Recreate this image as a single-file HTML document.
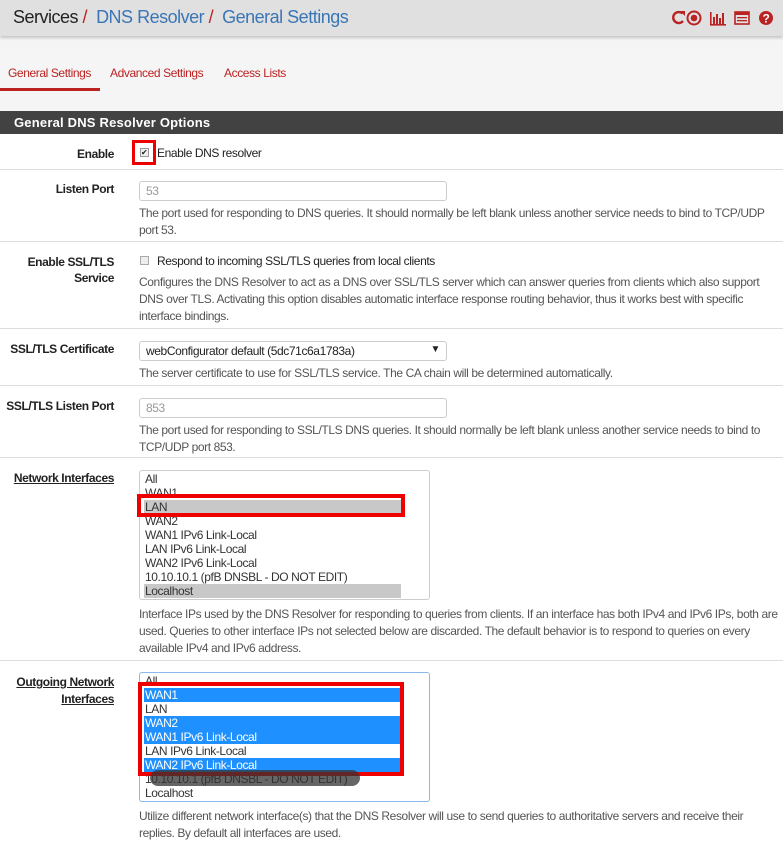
<!DOCTYPE html>
<html><head><meta charset="utf-8"><style>
*{box-sizing:border-box;margin:0;padding:0}
body{width:783px;height:843px;overflow:hidden;background:#f5f5f5;font-family:"Liberation Sans",sans-serif;font-size:12px;color:#222;position:relative;letter-spacing:-0.4px}
.a{position:absolute}
.hdr{left:0;top:0;width:783px;height:36px;background:#e0e0e0;box-shadow:0 2px 3px rgba(0,0,0,.2)}
.crumb{left:13px;top:7px;font-size:18px;letter-spacing:-0.5px}
.crumb .l{color:#3a76b5}.crumb .s{color:#b22}
.tabs{top:66px;font-size:12px;color:#b22}
.panel{left:0;top:111px;width:783px;height:740px;background:#fff}
.ph{left:0;top:111px;width:783px;height:23px;background:#424242;color:#fff;font-weight:bold;font-size:13px;padding:4px 14px;letter-spacing:0.2px}
.sep{left:0;width:783px;height:1px;background:#ddd}
.lbl{right:669px;text-align:right;font-weight:bold;font-size:12px}
.help{left:139px;width:642px;color:#555;line-height:17px}
.inp{left:139px;width:308px;height:20px;border:1px solid #ccc;border-radius:3px;color:#999;padding:2px 6px}
.lst{left:139px;width:291px;border:1px solid #ccc;border-radius:3px;background:#fff;line-height:14px;padding:1px 0 0 5px;overflow:hidden;color:#333}
.lst div{height:14px;margin-right:28px;padding-left:1px;margin-left:-1px}
</style></head><body>
<div class="a hdr"></div>
<div class="a crumb">Services <span class="s">/</span>&nbsp; <span class="l">DNS Resolver</span> <span class="s">/</span>&nbsp; <span class="l">General Settings</span></div>
<svg class="a" style="left:672px;top:9px" width="104" height="18" viewBox="0 0 104 18">
<g fill="none" stroke="#b22" stroke-width="2.4"><path d="M10.5 4.5 A5.5 5.5 0 1 0 11 12"/></g>
<path d="M8 2 L13 2 L13 7 Z" fill="#b22"/>
<circle cx="22" cy="9" r="6.5" fill="none" stroke="#b22" stroke-width="2"/><circle cx="22" cy="9" r="3.3" fill="#b22"/>
<g fill="#b22"><rect x="38" y="15" width="16" height="1.6"/><rect x="38" y="3" width="1.6" height="13"/><rect x="41" y="8" width="2" height="7"/><rect x="44" y="5" width="2" height="10"/><rect x="47" y="9" width="2" height="6"/><rect x="50" y="4" width="2" height="11"/></g>
<rect x="63" y="3" width="14" height="12" fill="none" stroke="#b22" stroke-width="1.6"/><g fill="#b22"><rect x="63" y="3" width="14" height="3"/><rect x="65" y="8" width="10" height="1.3"/><rect x="65" y="11" width="10" height="1.3"/></g>
<circle cx="94" cy="9" r="7" fill="#b22"/><text x="94" y="13.5" fill="#fff" font-size="12" font-weight="bold" text-anchor="middle" font-family="Liberation Sans">?</text>
</svg>
<div class="a tabs" style="left:8px">General Settings</div>
<div class="a tabs" style="left:110px">Advanced Settings</div>
<div class="a tabs" style="left:224px">Access Lists</div>
<div class="a" style="left:0;top:88px;width:100px;height:3px;background:#b22"></div>
<div class="a panel"></div>
<div class="a ph">General DNS Resolver Options</div>

<div class="a lbl" style="top:147px">Enable</div>
<div class="a" style="left:132px;top:140px;width:24px;height:25px;border:3px solid #e00"></div>
<div class="a" style="left:140px;top:148px;width:9px;height:9px;border:1px solid #999;background:#eee;font-size:8px;line-height:8px">✔</div>
<div class="a" style="left:157px;top:146px">Enable DNS resolver</div>
<div class="a sep" style="top:169px"></div>

<div class="a lbl" style="top:182px">Listen Port</div>
<div class="a inp" style="top:181px">53</div>
<div class="a help" style="top:205px">The port used for responding to DNS queries. It should normally be left blank unless another service needs to bind to TCP/UDP port 53.</div>
<div class="a sep" style="top:241px"></div>

<div class="a lbl" style="top:254px;line-height:16px">Enable SSL/TLS<br>Service</div>
<div class="a" style="left:140px;top:256px;width:9px;height:9px;border:1px solid #aaa;background:#eee"></div>
<div class="a" style="left:157px;top:254px">Respond to incoming SSL/TLS queries from local clients</div>
<div class="a help" style="top:274px;width:644px">Configures the DNS Resolver to act as a DNS over SSL/TLS server which can answer queries from clients which also support DNS over TLS. Activating this option disables automatic interface response routing behavior, thus it works best with specific interface bindings.</div>
<div class="a sep" style="top:328px"></div>

<div class="a lbl" style="top:342px">SSL/TLS Certificate</div>
<div class="a inp" style="top:341px;color:#222">webConfigurator default (5dc71c6a1783a)<span style="position:absolute;right:6px;font-size:10px">▼</span></div>
<div class="a help" style="top:365px">The server certificate to use for SSL/TLS service. The CA chain will be determined automatically.</div>
<div class="a sep" style="top:385px"></div>

<div class="a lbl" style="top:399px">SSL/TLS Listen Port</div>
<div class="a inp" style="top:398px">853</div>
<div class="a help" style="top:422px">The port used for responding to SSL/TLS DNS queries. It should normally be left blank unless another service needs to bind to TCP/UDP port 853.</div>
<div class="a sep" style="top:457px"></div>

<div class="a lbl" style="top:471px;text-decoration:underline">Network Interfaces</div>
<div class="a lst" style="top:470px;height:130px">
<div>All</div><div>WAN1</div><div style="background:#c8c8c8">LAN</div><div>WAN2</div><div>WAN1 IPv6 Link-Local</div><div>LAN IPv6 Link-Local</div><div>WAN2 IPv6 Link-Local</div><div>10.10.10.1 (pfB DNSBL - DO NOT EDIT)</div><div style="background:#c8c8c8">Localhost</div></div>
<div class="a" style="left:137px;top:494px;width:268px;height:23px;border:4px solid #e00"></div>
<div class="a help" style="top:606px;width:644px">Interface IPs used by the DNS Resolver for responding to queries from clients. If an interface has both IPv4 and IPv6 IPs, both are used. Queries to other interface IPs not selected below are discarded. The default behavior is to respond to queries on every available IPv4 and IPv6 address.</div>
<div class="a sep" style="top:660px"></div>

<div class="a lbl" style="top:674px;line-height:17px;text-decoration:underline">Outgoing Network<br>Interfaces</div>
<div class="a lst" style="top:672px;height:130px;border-color:#8ab8e8">
<div>All</div><div style="background:#1e90ff;color:#fff">WAN1</div><div>LAN</div><div style="background:#1e90ff;color:#fff">WAN2</div><div style="background:#1e90ff;color:#fff">WAN1 IPv6 Link-Local</div><div>LAN IPv6 Link-Local</div><div style="background:#1e90ff;color:#fff">WAN2 IPv6 Link-Local</div><div>10.10.10.1 (pfB DNSBL - DO NOT EDIT)</div><div>Localhost</div></div>
<div class="a" style="left:138px;top:682px;width:266px;height:94px;border:4px solid #e00"></div>
<div class="a" style="left:150px;top:770px;width:210px;height:16px;background:#333;opacity:.75;border-radius:8px"></div>
<div class="a help" style="top:808px">Utilize different network interface(s) that the DNS Resolver will use to send queries to authoritative servers and receive their replies. By default all interfaces are used.</div>
</body></html>
